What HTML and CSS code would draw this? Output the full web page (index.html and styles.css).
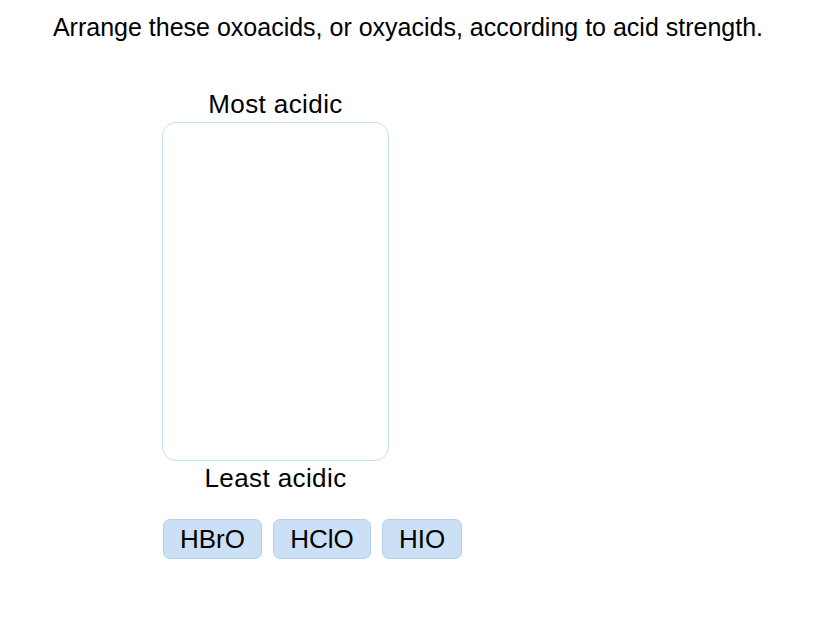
FILE: index.html
```html
<html>
  <head>
    <title>acid strength</title>
    <link rel="stylesheet" href="styles.css">
  </head>
  <body>
    <main>
      <p class="prompt">
        Arrange these oxoacids, or oxyacids, according to acid strength.
      </p>

      <div class="ranking">
        <div class="end top">Most acidic</div>
        <div class="dropzone"></div>
        <div class="end bottom">Least acidic</div>
      </div>

      <div class="pool">
        <div class="chip">HBrO</div>
        <div class="chip">HClO</div>
        <div class="chip">HIO</div>
      </div>
    </main>
  </body>
</html>
```

FILE: styles.css
```css
body {
  margin: 0;
  font: 26px "Liberation Sans", Arial, sans-serif;
  color: #000;
  background: #fff;
}

main {
  display: flex;
  flex-direction: column;
  padding-top: 13px;
}

.prompt {
  margin: 0;
  font-size: 25px;
  line-height: 29px;
  text-align: center;
  padding-right: 16px;
}

.ranking {
  display: flex;
  flex-direction: column;
  align-items: center;
  width: 227px;
  margin-left: 162px;
  margin-top: 47px;
}

.end {
  line-height: 30px;
  letter-spacing: 0.4px;
}
.end.top {
  margin-bottom: 3px;
}
.end.bottom {
  margin-top: 2px;
}

.dropzone {
  box-sizing: border-box;
  width: 227px;
  height: 339px;
  border: 1px solid #c6def2;
  border-radius: 14px;
}

.pool {
  display: flex;
  gap: 11px;
  margin-left: 163px;
  margin-top: 26px;
}

.chip {
  box-sizing: border-box;
  height: 40px;
  line-height: 38px;
  background: #cce0f5;
  border: 1px solid #b3d0ed;
  border-radius: 7px;
  text-align: center;
}
.chip:nth-child(1) {
  width: 99px;
}
.chip:nth-child(2) {
  width: 98px;
}
.chip:nth-child(3) {
  width: 80px;
}
```
